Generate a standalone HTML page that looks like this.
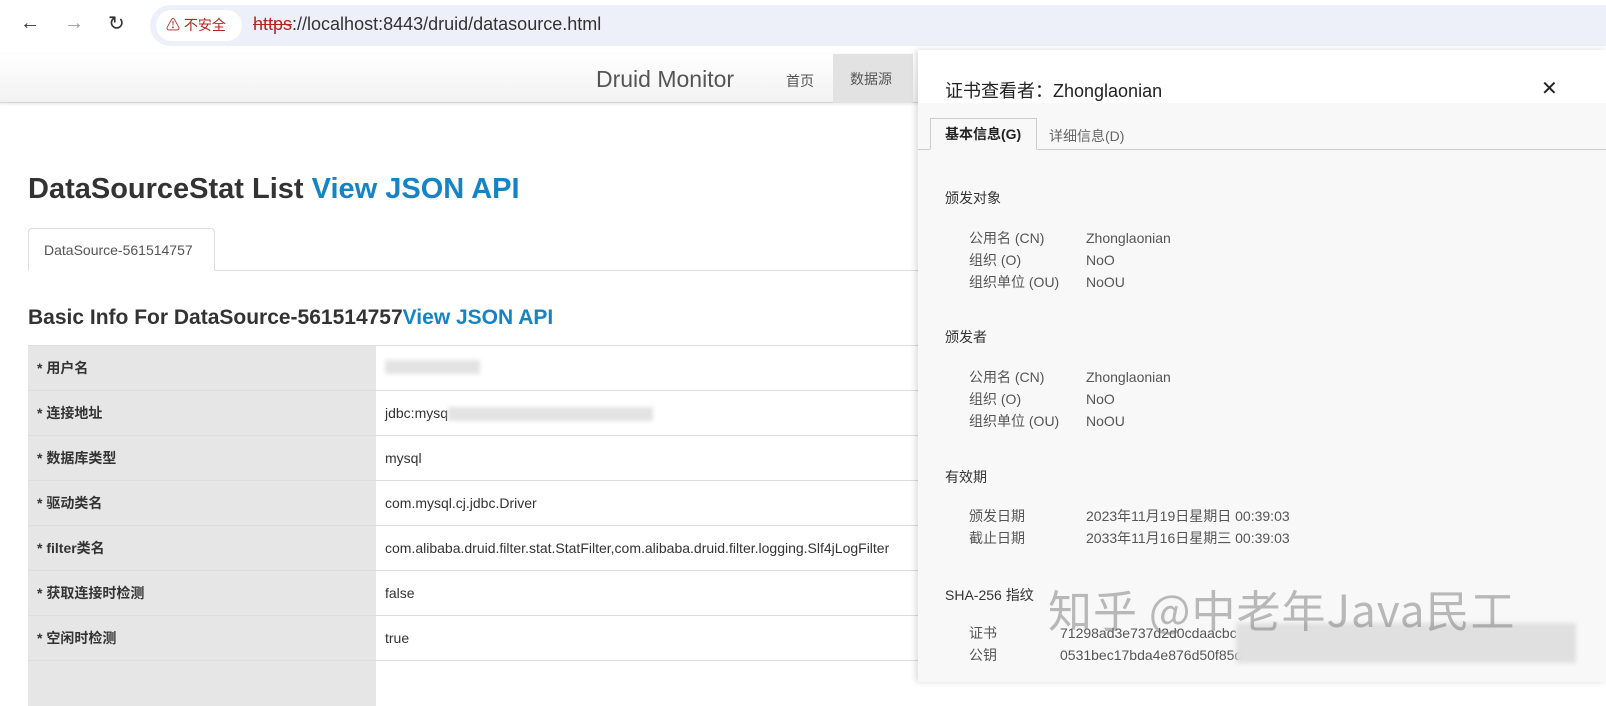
<!DOCTYPE html>
<html><head><meta charset="utf-8"><style>
*{margin:0;padding:0;box-sizing:border-box}
body{width:1606px;height:682px;overflow:hidden;background:#fff;font-family:"Liberation Sans","Noto Sans CJK SC",sans-serif;position:relative;color:#333}
.abs{position:absolute}
.url{left:150px;top:5px;width:1456px;height:41px;background:#edf0f9;border-radius:21px 0 0 21px}
.chip{left:156px;top:10px;width:86px;height:31px;background:#fff;border-radius:16px;color:#b3261e;font-size:14px;line-height:31px;padding-left:10px}
.nav{left:0;top:54px;width:920px;height:49px;background:linear-gradient(#fff,#f2f2f2);border-bottom:1px solid #d4d4d4;box-shadow:0 1px 3px rgba(0,0,0,.1)}
table{position:absolute;left:28px;top:345px;border-collapse:collapse;width:900px}
td{height:45px;border-top:1px solid #ddd;font-size:14px;padding-left:9px}
td.l{width:348px;background:#e6e6e6;font-weight:bold;color:#333}
.panel{left:918px;top:50px;width:688px;height:632px;background:#f8f8f8;box-shadow:-2px 0 6px rgba(0,0,0,.15);font-size:14px;color:#333}
.row{position:absolute;font-size:14px}
.blur{background:#e3e3e3;filter:blur(2px)}
</style></head><body>
<div class="abs" style="left:0;top:0;width:1606px;height:52px;background:#fff"></div>
<div class="abs" style="left:20px;top:12px;font-size:20px;color:#333">←</div>
<div class="abs" style="left:64px;top:12px;font-size:20px;color:#999">→</div>
<div class="abs" style="left:108px;top:11px;font-size:20px;color:#333">↻</div>
<div class="abs url"></div>
<div class="abs chip">⚠ 不安全</div>
<div class="abs" style="left:253px;top:14px;font-size:18px;color:#333"><span style="color:#b3261e;text-decoration:line-through">https</span>://localhost:8443/druid/datasource.html</div>
<div class="abs nav"></div>
<div class="abs" style="left:596px;top:66px;font-size:23px;color:#555">Druid Monitor</div>
<div class="abs" style="left:786px;top:71px;font-size:14px;color:#555">首页</div>
<div class="abs" style="left:833px;top:54px;width:80px;height:49px;background:#e2e2e2;font-size:14px;color:#555;line-height:50px;padding-left:17px">数据源</div>
<div class="abs" style="left:28px;top:173px;font-size:29px;font-weight:bold;color:#333">DataSourceStat List <span style="color:#1584c6">View JSON API</span></div>
<div class="abs" style="left:28px;top:270px;width:900px;border-top:1px solid #ddd"></div>
<div class="abs" style="left:28px;top:228px;width:187px;height:43px;border:1px solid #ddd;border-bottom:1px solid #fff;border-radius:4px 4px 0 0;background:#fff;font-size:14px;color:#555;line-height:42px;padding-left:15px">DataSource-561514757</div>
<div class="abs" style="left:28px;top:306px;font-size:21px;font-weight:bold;color:#333">Basic Info For DataSource-561514757<span style="color:#1584c6">View JSON API</span></div>
<table>
<tr><td class="l">* 用户名</td><td><span class="blur" style="display:inline-block;width:95px;height:14px"></span></td></tr>
<tr><td class="l">* 连接地址</td><td>jdbc:mysq<span class="blur" style="display:inline-block;width:205px;height:14px;vertical-align:middle"></span></td></tr>
<tr><td class="l">* 数据库类型</td><td>mysql</td></tr>
<tr><td class="l">* 驱动类名</td><td>com.mysql.cj.jdbc.Driver</td></tr>
<tr><td class="l">* filter类名</td><td>com.alibaba.druid.filter.stat.StatFilter,com.alibaba.druid.filter.logging.Slf4jLogFilter</td></tr>
<tr><td class="l">* 获取连接时检测</td><td>false</td></tr>
<tr><td class="l">* 空闲时检测</td><td>true</td></tr>
<tr><td class="l">&nbsp;</td><td></td></tr>
</table>
<div class="abs panel">
 <div class="abs" style="left:0;top:0;width:688px;height:53px;background:#fff"></div>
 <div class="abs" style="left:27px;top:27px;font-size:18px;color:#222">证书查看者：Zhonglaonian</div>
 <div class="abs" style="left:623px;top:26px;font-size:20px;color:#222">✕</div>
 <div class="abs" style="left:0;top:99px;width:688px;border-top:1px solid #ccc"></div>
 <div class="abs" style="left:12px;top:68px;width:107px;height:32px;border:1px solid #ccc;border-bottom:1px solid #f8f8f8;background:#f8f8f8;font-weight:bold;font-size:14px;line-height:31px;padding-left:14px;color:#222">基本信息(G)</div>
 <div class="abs" style="left:131px;top:76px;color:#666">详细信息(D)</div>
 <div class="row" style="left:27px;top:138px">颁发对象</div>
 <div class="row" style="left:51px;top:177px;line-height:22px;color:#555">公用名 (CN)<br>组织 (O)<br>组织单位 (OU)</div>
 <div class="row" style="left:168px;top:177px;line-height:22px;color:#555">Zhonglaonian<br>NoO<br>NoOU</div>
 <div class="row" style="left:27px;top:277px">颁发者</div>
 <div class="row" style="left:51px;top:316px;line-height:22px;color:#555">公用名 (CN)<br>组织 (O)<br>组织单位 (OU)</div>
 <div class="row" style="left:168px;top:316px;line-height:22px;color:#555">Zhonglaonian<br>NoO<br>NoOU</div>
 <div class="row" style="left:27px;top:417px">有效期</div>
 <div class="row" style="left:51px;top:455px;line-height:22px;color:#555">颁发日期<br>截止日期</div>
 <div class="row" style="left:168px;top:455px;line-height:22px;color:#555">2023年11月19日星期日 00:39:03<br>2033年11月16日星期三 00:39:03</div>
 <div class="row" style="left:27px;top:535px">SHA-256 指纹</div>
 <div class="row" style="left:51px;top:572px;line-height:22px;color:#555">证书<br>公钥</div>
 <div class="row" style="left:142px;top:572px;line-height:22px;color:#555">71298ad3e737d2d0cdaacbc<br>0531bec17bda4e876d50f85d</div>
 <div class="abs blur" style="left:318px;top:573px;width:340px;height:40px;background:#e0e0e0"></div>
 <div class="abs" style="left:130px;top:526px;font-size:44px;color:rgba(120,120,120,.5);font-family:'Noto Sans CJK SC','Liberation Sans',sans-serif;letter-spacing:1px">知乎 @中老年Java民工</div>
</div>
</body></html>
